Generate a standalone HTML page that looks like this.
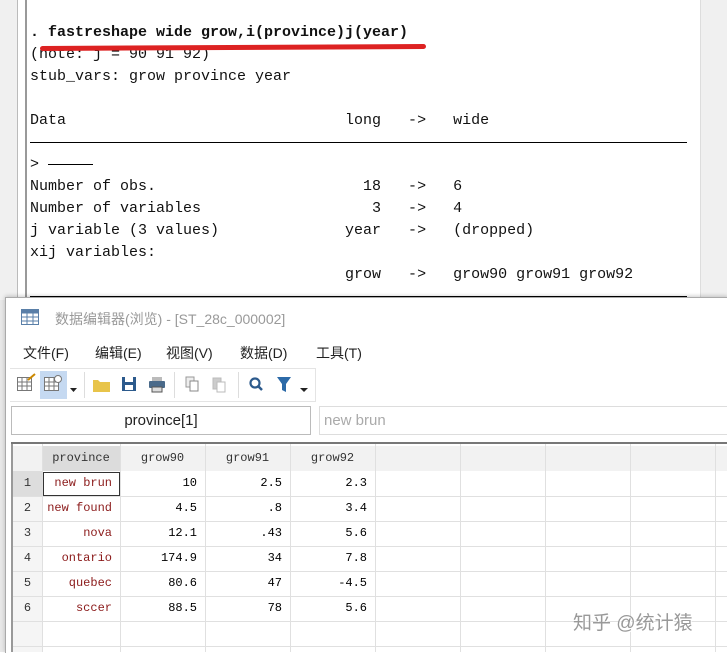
<!DOCTYPE html><html><head><meta charset="utf-8"><style>
body{margin:0;width:727px;height:652px;overflow:hidden;position:relative;background:#fff;font-family:"Liberation Sans","Noto Sans CJK SC",sans-serif}
.a{position:absolute}
.mono{font-family:"Liberation Mono","DejaVu Sans Mono",monospace;font-size:15px;white-space:pre;color:#111}
.cell{position:absolute;font-family:"Liberation Mono",monospace;font-size:12px;text-align:right;height:25px;line-height:25px}
</style></head><body>
<div class="a" style="left:0;top:0;width:17px;height:300px;background:#f0f0f0"></div>
<div class="a" style="left:17px;top:0;width:1px;height:300px;background:#bbb"></div>
<div class="a" style="left:25px;top:0;width:2px;height:300px;background:#999"></div>
<div class="a" style="left:700px;top:0;width:27px;height:300px;background:#f0f0f0;border-left:1px solid #ddd"></div>
<div class="a mono" style="left:30px;top:24px;font-weight:bold">. fastreshape wide grow,i(province)j(year)</div>
<div class="a mono" style="left:30px;top:46px">(note: j = 90 91 92)</div>
<div class="a" style="left:40px;top:45px;width:386px;height:5px;background:#d22;border-radius:3px;transform:rotate(-0.3deg)"></div>
<div class="a mono" style="left:30px;top:68px">stub_vars: grow province year</div>
<div class="a mono" style="left:30px;top:112px">Data                               long   ->   wide</div>
<div class="a" style="left:30px;top:142px;width:657px;height:1px;background:#000"></div>
<div class="a mono" style="left:30px;top:156px">&gt; </div>
<div class="a" style="left:48px;top:164px;width:45px;height:1px;background:#000"></div>
<div class="a mono" style="left:30px;top:178px">Number of obs.                       18   ->   6</div>
<div class="a mono" style="left:30px;top:200px">Number of variables                   3   ->   4</div>
<div class="a mono" style="left:30px;top:222px">j variable (3 values)              year   ->   (dropped)</div>
<div class="a mono" style="left:30px;top:244px">xij variables:</div>
<div class="a mono" style="left:30px;top:266px">                                   grow   ->   grow90 grow91 grow92</div>
<div class="a" style="left:30px;top:296px;width:657px;height:1px;background:#000"></div>
<div class="a" style="left:0;top:300px;width:6px;height:352px;background:#e8e8e8"></div>
<div class="a" style="left:5px;top:297px;width:722px;height:355px;background:#fff;border-left:1px solid #aaa;border-top:1px solid #aaa;box-shadow:0 -1px 4px rgba(0,0,0,.2)"></div>
<svg class="a" style="left:21px;top:309px" width="18" height="16"><rect x="0.5" y="0.5" width="17" height="15" fill="#fff" stroke="#5a7fa8"/><rect x="0.5" y="0.5" width="17" height="4" fill="#5a7fa8"/><path d="M0 8H18M0 12H18M6 4V16M12 4V16" stroke="#5a7fa8"/></svg>
<div class="a" style="left:55px;top:309px;font-size:14px;color:#999">数据编辑器(浏览) - [ST_28c_000002]</div>
<div class="a" style="left:23px;top:343px;font-size:14px;color:#222">文件(F)</div>
<div class="a" style="left:95px;top:343px;font-size:14px;color:#222">编辑(E)</div>
<div class="a" style="left:166px;top:343px;font-size:14px;color:#222">视图(V)</div>
<div class="a" style="left:240px;top:343px;font-size:14px;color:#222">数据(D)</div>
<div class="a" style="left:316px;top:343px;font-size:14px;color:#222">工具(T)</div>
<div class="a" style="left:10px;top:368px;width:305px;height:32px;border:1px solid #e4e4e4;border-left:none"></div>
<div class="a" style="left:40px;top:371px;width:27px;height:28px;background:#c5d9f1"></div>
<svg class="a" style="left:10px;top:370px" width="310" height="30">
<g stroke="#777" fill="#fff"><rect x="7.5" y="7.5" width="14" height="13"/><path d="M7 12H22M7 16H22M12 8V21M17 8V21"/><rect x="34.5" y="7.5" width="14" height="13"/><path d="M34 12H49M34 16H49M39 8V21M44 8V21"/></g>
<path d="M18 10L25 4" stroke="#c80" stroke-width="2"/><circle cx="48" cy="9" r="3.5" fill="#fff" stroke="#777"/>
<path d="M60 18h7l-3.5 4z" fill="#222"/>
<line x1="74.5" y1="2" x2="74.5" y2="28" stroke="#ddd"/>
<path d="M83 10h5l2 2h10v10H83z" fill="#e8c44a"/>
<rect x="112" y="7" width="14" height="14" fill="#2c5a8c"/><rect x="115" y="7" width="8" height="5" fill="#fff"/><rect x="115" y="15" width="8" height="5" fill="#fff"/>
<rect x="139" y="11" width="16" height="7" rx="1" fill="#4a6a8a"/><rect x="142" y="7" width="10" height="4" fill="#bbb"/><rect x="142" y="17" width="10" height="5" fill="#ddd" stroke="#555"/>
<line x1="164.5" y1="2" x2="164.5" y2="28" stroke="#ddd"/>
<rect x="176" y="7" width="8" height="10" fill="#eee" stroke="#999"/><rect x="180" y="11" width="8" height="10" fill="#fff" stroke="#888"/>
<rect x="203" y="8" width="8" height="11" fill="#ccc" stroke="#bbb"/><rect x="207" y="12" width="8" height="10" fill="#fff" stroke="#bbb"/>
<line x1="228.5" y1="2" x2="228.5" y2="28" stroke="#ddd"/>
<circle cx="245" cy="13" r="4.5" fill="none" stroke="#2c5a8c" stroke-width="2.2"/><path d="M248 16l4 4" stroke="#2c5a8c" stroke-width="2.5"/>
<path d="M267 7h14l-5 7v8l-4-2v-6z" fill="#2c6aa8"/>
<path d="M290 18h8l-4 4z" fill="#222"/>
</svg>
<div class="a" style="left:11px;top:406px;width:298px;height:27px;border:1px solid #bbb;text-align:center;line-height:27px;font-size:15px;color:#222">province[1]</div>
<div class="a" style="left:319px;top:406px;width:420px;height:27px;border:1px solid #ddd;line-height:27px;font-size:15px;color:#aaa;padding-left:4px">new brun</div>
<div class="a" style="left:11px;top:442px;width:716px;height:2px;background:#777"></div>
<div class="a" style="left:11px;top:444px;width:2px;height:208px;background:#999"></div>
<div class="a" style="left:13px;top:446px;width:714px;height:25px;background:#f2f2f2"></div>
<div class="a" style="left:13px;top:471px;width:29px;height:181px;background:#f5f5f5"></div>
<div class="a" style="left:13px;top:471px;width:29px;height:25px;background:#ddd"></div>
<div class="a" style="left:42px;top:446px;width:78px;height:25px;background:#dcdcdc"></div>
<svg class="a" style="left:0;top:444px" width="727" height="208">
<g stroke="#e0e0e0"><path d="M42.5 0V208M120.5 0V208M205.5 0V208M290.5 0V208M375.5 0V208M460.5 0V208M545.5 0V208M630.5 0V208M715.5 0V208"/>
<path d="M13 52.5H727M13 77.5H727M13 102.5H727M13 127.5H727M13 152.5H727M13 177.5H727M13 202.5H727"/></g>
</svg>
<div class="a" style="left:43px;top:472px;width:75px;height:22px;border:1px solid #333"></div>
<div class="cell" style="left:42px;top:446px;width:78px;text-align:center;color:#333">province</div>
<div class="cell" style="left:120px;top:446px;width:85px;text-align:center;color:#333">grow90</div>
<div class="cell" style="left:205px;top:446px;width:85px;text-align:center;color:#333">grow91</div>
<div class="cell" style="left:290px;top:446px;width:85px;text-align:center;color:#333">grow92</div>
<div class="cell" style="left:13px;top:471px;width:29px;text-align:center;color:#333">1</div>
<div class="cell" style="left:13px;top:496px;width:29px;text-align:center;color:#333">2</div>
<div class="cell" style="left:13px;top:521px;width:29px;text-align:center;color:#333">3</div>
<div class="cell" style="left:13px;top:546px;width:29px;text-align:center;color:#333">4</div>
<div class="cell" style="left:13px;top:571px;width:29px;text-align:center;color:#333">5</div>
<div class="cell" style="left:13px;top:596px;width:29px;text-align:center;color:#333">6</div>
<div class="cell" style="left:42px;top:471px;width:70px;color:#8b1a1a">new brun</div>
<div class="cell" style="left:42px;top:496px;width:70px;color:#8b1a1a">new found</div>
<div class="cell" style="left:42px;top:521px;width:70px;color:#8b1a1a">nova</div>
<div class="cell" style="left:42px;top:546px;width:70px;color:#8b1a1a">ontario</div>
<div class="cell" style="left:42px;top:571px;width:70px;color:#8b1a1a">quebec</div>
<div class="cell" style="left:42px;top:596px;width:70px;color:#8b1a1a">sccer</div>
<div class="cell" style="left:120px;top:471px;width:77px">10</div><div class="cell" style="left:205px;top:471px;width:77px">2.5</div><div class="cell" style="left:290px;top:471px;width:77px">2.3</div>
<div class="cell" style="left:120px;top:496px;width:77px">4.5</div><div class="cell" style="left:205px;top:496px;width:77px">.8</div><div class="cell" style="left:290px;top:496px;width:77px">3.4</div>
<div class="cell" style="left:120px;top:521px;width:77px">12.1</div><div class="cell" style="left:205px;top:521px;width:77px">.43</div><div class="cell" style="left:290px;top:521px;width:77px">5.6</div>
<div class="cell" style="left:120px;top:546px;width:77px">174.9</div><div class="cell" style="left:205px;top:546px;width:77px">34</div><div class="cell" style="left:290px;top:546px;width:77px">7.8</div>
<div class="cell" style="left:120px;top:571px;width:77px">80.6</div><div class="cell" style="left:205px;top:571px;width:77px">47</div><div class="cell" style="left:290px;top:571px;width:77px">-4.5</div>
<div class="cell" style="left:120px;top:596px;width:77px">88.5</div><div class="cell" style="left:205px;top:596px;width:77px">78</div><div class="cell" style="left:290px;top:596px;width:77px">5.6</div>
<div class="a" style="left:573px;top:608px;font-size:19px;color:#999;text-shadow:1px 1px 0 #fff">知乎 @统计猿</div>
</body></html>
